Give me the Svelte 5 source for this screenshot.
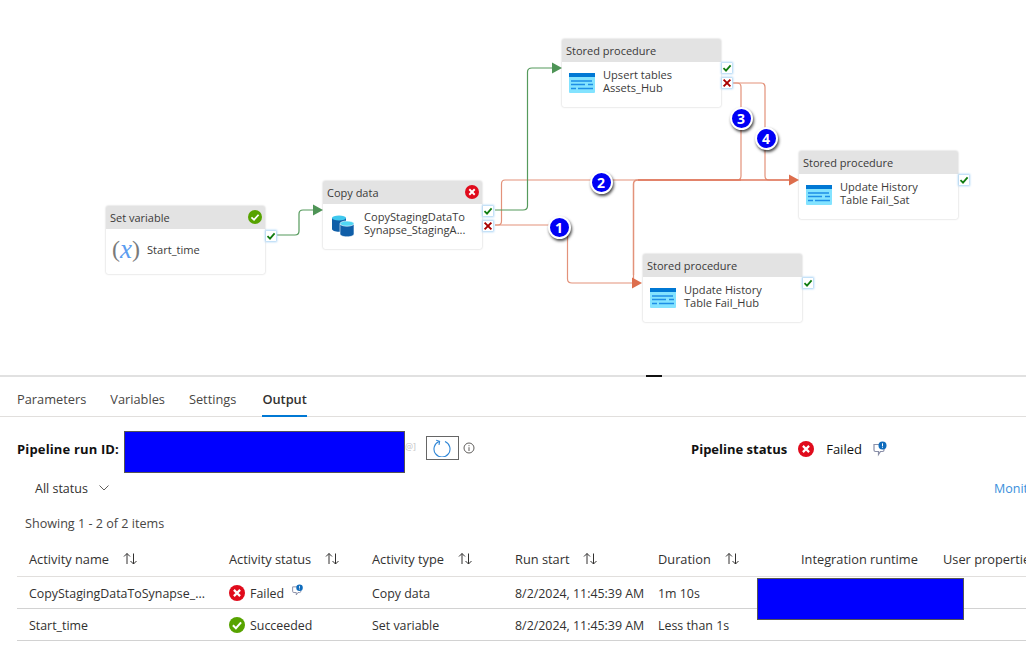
<script>
  const nodes = [
    { kind: 'var', title: 'Set variable', lines: ['Start_time'], x: 106, y: 206, state: 'ok', checks: [25] },
    { kind: 'db', title: 'Copy data', lines: ['CopyStagingDataTo', 'Synapse_StagingA...'], x: 323, y: 181, state: 'bad', checks: [25], crosses: [40] },
    { kind: 'sp', title: 'Stored procedure', lines: ['Upsert tables', 'Assets_Hub'], x: 562, y: 39, checks: [24], crosses: [39] },
    { kind: 'sp', title: 'Stored procedure', lines: ['Update History', 'Table Fail_Sat'], x: 799, y: 151, checks: [24] },
    { kind: 'sp', title: 'Stored procedure', lines: ['Update History', 'Table Fail_Hub'], x: 643, y: 254, checks: [24] }
  ];
  const badges = [
    { n: 1, x: 559, y: 227 },
    { n: 2, x: 601, y: 182 },
    { n: 3, x: 741, y: 118 },
    { n: 4, x: 766, y: 138 }
  ];
  const tabs = ['Parameters', 'Variables', 'Settings', 'Output'];
  const cols = [
    { t: 'Activity name', sort: true },
    { t: 'Activity status', sort: true },
    { t: 'Activity type', sort: true },
    { t: 'Run start', sort: true },
    { t: 'Duration', sort: true },
    { t: 'Integration runtime' },
    { t: 'User properties' }
  ];
  const rows = [
    { name: 'CopyStagingDataToSynapse_...', status: 'Failed', type: 'Copy data', start: '8/2/2024, 11:45:39 AM', dur: '1m 10s' },
    { name: 'Start_time', status: 'Succeeded', type: 'Set variable', start: '8/2/2024, 11:45:39 AM', dur: 'Less than 1s' }
  ];
</script>

{#snippet checkMark()}
  <svg viewBox="0 0 10 10" width="10" height="10"><path d="M1.5 5.2 L4 7.6 L8.6 2.4" fill="none" stroke="#107c10" stroke-width="1.8"/></svg>
{/snippet}
{#snippet crossMark()}
  <svg viewBox="0 0 10 10" width="10" height="10"><path d="M1.6 1.6 L8.4 8.4 M8.4 1.6 L1.6 8.4" fill="none" stroke="#a80000" stroke-width="1.9"/></svg>
{/snippet}
{#snippet failIcon(s)}
  <svg viewBox="0 0 16 16" width={s} height={s}><circle cx="8" cy="8" r="8" fill="#e00b1c"/><path d="M4.9 4.9 L11.1 11.1 M11.1 4.9 L4.9 11.1" stroke="#fff" stroke-width="2.2"/></svg>
{/snippet}
{#snippet okIcon(s)}
  <svg viewBox="0 0 16 16" width={s} height={s}><circle cx="8" cy="8" r="8" fill="#57a300"/><path d="M3.9 8.3 L6.9 11.2 L12.1 5.4" fill="none" stroke="#fff" stroke-width="2"/></svg>
{/snippet}
{#snippet spIcon()}
  <svg viewBox="0 0 26 20" width="26" height="20"><rect width="26" height="20" y="0" rx="1" fill="#83e3ff"/><rect width="26" height="4" fill="#0078d4"/><path d="M2 8h21M2 11.5h14M19 11.5h5M2 15.5h5M9 15.5h15" stroke="#1e8fe6" stroke-width="1.3"/></svg>
{/snippet}
{#snippet dbIcon()}
  <svg viewBox="0 0 22 22" width="22" height="22">
    <path d="M0 3v11c0 1.6 3 2.8 7 2.8s7-1.2 7-2.8V3z" fill="#0f5ea8"/><ellipse cx="7" cy="3" rx="7" ry="2.6" fill="#3fc8ee"/>
    <path d="M8 9v10c0 1.6 3 2.8 7 2.8s7-1.2 7-2.8V9z" fill="#0f5ea8" stroke="#fff" stroke-width=".6"/><ellipse cx="15" cy="8.6" rx="7" ry="2.6" fill="#50d6f4" stroke="#fff" stroke-width=".6"/>
  </svg>
{/snippet}
{#snippet feedback(s)}
  <svg viewBox="0 0 16 16" width={s} height={s}>
    <path d="M2 3.5h8.5a1.5 1.5 0 0 1 1.5 1.5v4a1.5 1.5 0 0 1-1.5 1.5H8.5L6.5 13.5V10.500H3.500A1.500 1.500 0 0 1 2 9z" fill="none" stroke="#8a8fa8" stroke-width="1.200"/>
    <circle cx="10.500" cy="4.500" r="4" fill="#0f6cbd"/><rect x="10" y="2.300" width="1" height="2.800" fill="#fff"/><rect x="10" y="5.700" width="1" height="1" fill="#fff"/>
  </svg>
{/snippet}
{#snippet sortIcon()}
  <svg class="sort" viewBox="0 0 15 13" width="15" height="13"><path d="M4 12V1.500M1 4.500 4 1.500l3 3M10.500 1.500V12M7.500 9l3 3 3-3" fill="none" stroke="#323130" stroke-width="1"/></svg>
{/snippet}

<div class="page">
  <section class="canvas">
    <svg class="links" width="1026" height="375" viewBox="0 0 1026 375">
      <g fill="none" stroke="#e3927a" stroke-width="1.200">
        <path d="M495 225H498Q501.500 225 501.500 221V184Q501.500 180 505 180H737Q741 180 741 176V87Q741 83 737 83H733"/>
        <path d="M495 225H564Q567.500 225 567.500 229V279Q567.500 283 572 283H633"/>
        <path d="M733 83H761Q765 83 765 87V176Q765 180 769 180H790"/>
        <path d="M741 180H638Q633.500 180 633.500 184V275" stroke-width="1.500"/>
        <path d="M633.500 275V280Q633.500 283 636 283" />
      </g>
      <path d="M638 180H790" fill="none" stroke="#e07a5f" stroke-width="1.400"/>
      <g fill="#dd6e4d"><path d="M789 174.500 799 180 789 185.500z"/><path d="M632 277.500 642 283 632 288.500z"/></g>
      <g fill="none" stroke="#559a5c" stroke-width="1.200">
        <path d="M277 235H295Q299 235 299 231V214Q299 210 303 210H314"/>
        <path d="M495 210H523Q527.500 210 527.500 206V72Q527.500 68 532 68H553"/>
      </g>
      <g fill="#4e9456"><path d="M313 204.500 323 210 313 215.500z"/><path d="M552 62.500 562 68 552 73.500z"/></g>
    </svg>

    {#each nodes as n}
      <div class="node" style="left:{n.x}px;top:{n.y}px">
        <header class="node-head">
          <span>{n.title}</span>
          {#if n.state === 'ok'}{@render okIcon(14)}{/if}
          {#if n.state === 'bad'}{@render failIcon(14)}{/if}
        </header>
        <div class="node-body">
          <span class="node-icon">
            {#if n.kind === 'sp'}{@render spIcon()}{/if}
            {#if n.kind === 'db'}{@render dbIcon()}{/if}
            {#if n.kind === 'var'}<span class="varicon"><i class="par">(</i><i class="x">x</i><i class="par">)</i></span>{/if}
          </span>
          <span class="node-text" class:single={n.lines.length === 1}>
            {#each n.lines as l}<span>{l}</span>{/each}
          </span>
        </div>
        {#each n.checks ?? [] as t}
          <span class="port" style="top:{t}px">{@render checkMark()}</span>
        {/each}
        {#each n.crosses ?? [] as t}
          <span class="port" style="top:{t}px">{@render crossMark()}</span>
        {/each}
      </div>
    {/each}

    {#each badges as b}
      <span class="badge" style="left:{b.x}px;top:{b.y}px">{b.n}</span>
    {/each}
  </section>

  <section class="pane">
    <span class="grip"></span>
    <nav class="tabs">
      {#each tabs as t}
        <span class="tab" class:active={t === 'Output'}>{t}</span>
      {/each}
    </nav>

    <div class="run-row">
      <div class="run-left">
        <strong class="run-label">Pipeline run ID:</strong>
        <span class="redact run-id"></span>
        <span class="copy">@]</span>
        <button class="refresh" aria-label="Refresh">
          <svg viewBox="0 0 18 18" width="18" height="18"><path d="M6 2.600A8 8 0 1 0 12 2.600" fill="none" stroke="#2f86d6" stroke-width="1.100"/><path d="M3.200 1.200 6.600 2.300 6 5.800" fill="none" stroke="#2f86d6" stroke-width="1.100"/></svg>
        </button>
        <svg class="info" viewBox="0 0 12 12" width="12" height="12"><circle cx="6" cy="6" r="5" fill="none" stroke="#605e5c"/><path d="M6 5.200V9M6 3.200v1" stroke="#605e5c"/></svg>
      </div>
      <div class="run-status">
        <strong>Pipeline status</strong>
        {@render failIcon(16)}
        <span class="status-text">Failed</span>
        {@render feedback(16)}
      </div>
    </div>

    <div class="filter-row">
      <span class="filter">All status
        <svg viewBox="0 0 10 6" width="10" height="6"><path d="M.5.500 5 5 9.500.500" fill="none" stroke="#605e5c"/></svg>
      </span>
      <span class="monitor">Monit</span>
    </div>

    <p class="count">Showing 1 - 2 of 2 items</p>

    <div class="table">
      <div class="tr thead">
        {#each cols as c}
          <span class="cell">{c.t}{#if c.sort}{@render sortIcon()}{/if}</span>
        {/each}
      </div>
      {#each rows as r}
        <div class="tr">
          <span class="cell">{r.name}</span>
          <span class="cell status">
            {#if r.status === 'Failed'}{@render failIcon(16)}{:else}{@render okIcon(16)}{/if}
            {r.status}
            {#if r.status === 'Failed'}<span class="fb">{@render feedback(13)}</span>{/if}
          </span>
          <span class="cell">{r.type}</span>
          <span class="cell">{r.start}</span>
          <span class="cell">{r.dur}</span>
          <span class="cell"></span>
          <span class="cell"></span>
        </div>
      {/each}
      <span class="redact table-redact"></span>
    </div>
  </section>
</div>

<style>
  :global(body) { margin: 0; background: #fff; overflow: hidden; }
  .page {
    width: 1026px; height: 668px; overflow: hidden; background: #fff;
    font-family: "Open Sans", "Liberation Sans", sans-serif; font-size: 12px; color: #323130;
  }
  .canvas { position: relative; height: 375px; }
  .links { position: absolute; inset: 0; }
  .node {
    position: absolute; width: 159px; height: 68px; box-sizing: border-box; background: #fff;
    border-radius: 2px; box-shadow: 0 0 2px rgba(0,0,0,.25);
  }
  .node-head {
    height: 23px; background: #e3e3e3; display: flex; align-items: center; justify-content: space-between;
    padding: 0 3px 1px 4px; box-sizing: border-box; border-radius: 2px 2px 0 0; font-size: 11px; color: #3b3a39;
  }
  .node-body { display: flex; padding: 6px 0 0 7px; gap: 8px; }
  .node-icon { width: 26px; margin-top: 5px; display: flex; flex: none; justify-content: center; }
  .node-text { display: flex; flex-direction: column; font-size: 11.100px; line-height: 13px; color: #3b3a39; white-space: nowrap; }
  .node-text.single { line-height: 30px; }
  .varicon { display: flex; align-items: center; height: 22px; font-family: "Liberation Serif", serif; line-height: 22px; margin-top: -2px; }
  .varicon i.par { color: #7a7a7a; font-style: normal; font-size: 24px; }
  .varicon i.x { color: #5b9df0; font-style: italic; font-size: 27px; }
  .port {
    position: absolute; left: 160px; width: 10px; height: 10px; background: #fff; display: flex;
    box-shadow: 0 0 2px 1px #a9d3f5;
  }
  .badge {
    position: absolute; width: 19px; height: 19px; margin: -11.500px 0 0 -11.500px; border: 2px solid #fff; border-radius: 50%;
    background: #0000f5; color: #fff; font-weight: 700; font-size: 14px; line-height: 19px; text-align: center;
    box-shadow: 1px 2px 3px rgba(0,0,0,.7);
  }
  .pane { position: relative; border-top: 2px solid #e1e1e1; }
  .grip { position: absolute; left: 646px; top: -2px; width: 16px; height: 2px; background: #111; }
  .tabs { display: flex; gap: 24px; height: 40px; box-sizing: border-box; padding-left: 17px; border-bottom: 1px solid #e1dfdd; font-size: 12.800px; }
  .tab { display: flex; align-items: center; height: 40px; box-sizing: border-box; padding-top: 4px; color: #484644; }
  .tab.active { margin-left: 2px; color: #323130; font-weight: 600; box-shadow: inset 0 -2px 0 #0078d4; }
  .run-row { display: flex; align-items: center; height: 64px; padding-left: 17px; color: #111; font-size: 13px; }
  .run-left { display: flex; align-items: center; width: 674px; flex: none; }
  .run-left strong, .run-status strong { font-weight: 700; color: #111; }
  .run-left .run-label { letter-spacing: .15px; }
  .redact { background: #0000ff; border: 1px solid #555; box-sizing: border-box; display: block; }
  .run-id { width: 281px; height: 42px; margin: 5px 0 0 5px; }
  .copy { width: 21px; font-size: 9px; color: #c4c4c4; margin-bottom: 6px; flex: none; }
  .refresh { width: 33px; height: 24px; margin-bottom: 3px; border: 1px solid #666; background: #fff; padding: 0; display: flex; align-items: center; justify-content: center; }
  .info { margin: 0 0 2px 4px; }
  .run-status { display: flex; align-items: center; }
  .run-status svg:nth-of-type(1) { margin-left: 11px; }
  .status-text { margin: 0 10px 0 12px; }
  .filter-row { display: flex; justify-content: space-between; height: 14px; align-items: center; padding-left: 35px; font-size: 12.500px; }
  .filter { display: flex; align-items: center; gap: 11px; }
  .monitor { color: #3a8fdc; width: 32px; white-space: nowrap; }
  .count { margin: 21px 0 0 25px; line-height: 16px; font-size: 12.600px; color: #484644; }
  .table { position: relative; margin: 10px 0 0 17px; }
  .tr { display: grid; grid-template-columns: 200px 143px 143px 143px 143px 142px 142px; box-sizing: border-box; height: 32px; padding-top: 1px; align-items: center; border-bottom: 1px solid #d2d2d2; white-space: nowrap; font-size: 12.400px; }
  .thead { height: 35px; padding: 0 0 1px; border-bottom-color: #e1dfdd; color: #323130; font-size: 12.800px; }
  .cell { padding-left: 12px; display: flex; align-items: center; white-space: nowrap; }
  .sort { margin-left: 14px; }
  .status { gap: 5px; }
  .fb { display: flex; margin: -6px 0 0 2px; }
  .table-redact { position: absolute; left: 740px; top: 36px; width: 207px; height: 42px; }
</style>
